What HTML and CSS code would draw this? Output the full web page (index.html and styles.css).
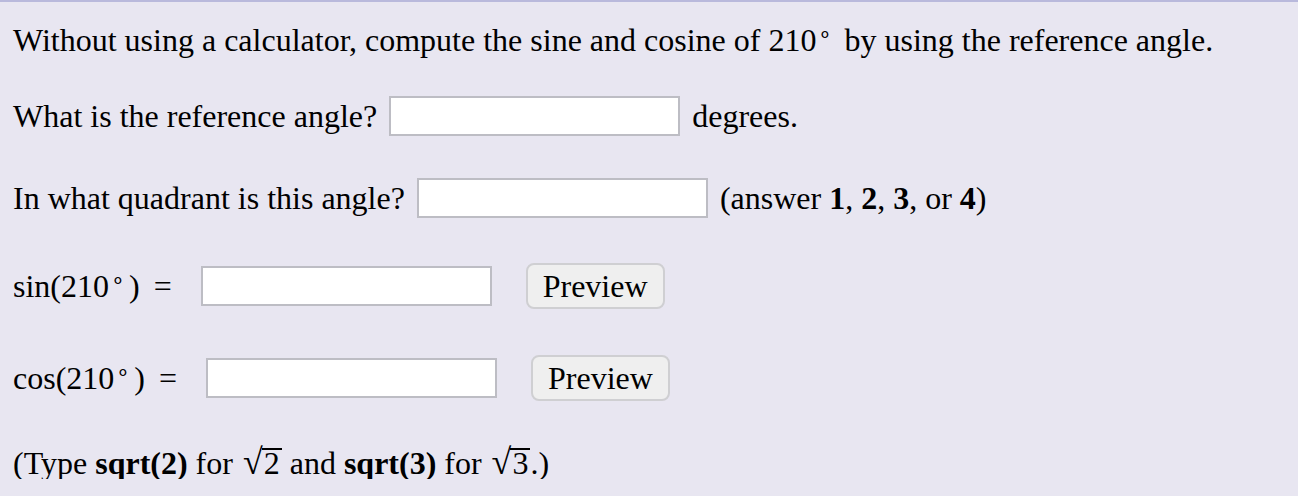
FILE: index.html
```html
<!DOCTYPE html>
<html lang="en">
<head>
	<meta charset="UTF-8">
	<title>Reference angle</title>
	<link rel="stylesheet" href="styles.css">
</head>
<body>
	<div class="wrap">
		<p class="row intro">Without using a calculator, compute the sine and cosine of <span class="math">210<sup class="deg">&#8728;</sup></span> by using the reference angle.</p>
		<div class="row field first">
			<span>What is the reference angle?</span>
			<input type="text" class="ans">
			<span>degrees.</span>
		</div>
		<div class="row field second">
			<span>In what quadrant is this angle?</span>
			<input type="text" class="ans">
			<span>(answer <b>1</b>, <b>2</b>, <b>3</b>, or <b>4</b>)</span>
		</div>
		<div class="row field trig">
			<span class="math fn">sin(210<sup class="deg">&#8728;</sup>) <span class="eq">=</span></span>
			<input type="text" class="ans">
			<button class="preview">Preview</button>
		</div>
		<div class="row field trig cos">
			<span class="math fn">cos(210<sup class="deg">&#8728;</sup>) <span class="eq">=</span></span>
			<input type="text" class="ans">
			<button class="preview">Preview</button>
		</div>
		<p class="row note">(Type <b>sqrt(2)</b> for <span class="sqrt"><span class="rt">&#8730;</span><span class="rad">2</span></span> and <b>sqrt(3)</b> for <span class="sqrt"><span class="rt">&#8730;</span><span class="rad">3</span></span>.)</p>
	</div>
</body>
</html>
```
FILE: styles.css
```css
*{
	margin: 0;
	padding: 0;
	box-sizing: border-box;
}
html,body{
	background: #e8e6f1;
}
body{
	font-family: "Liberation Serif", "Times New Roman", serif;
	font-size: 32px;
	color: #000;
	border-top: 2px solid #b9b9dc;
}
.wrap{
	padding: 0 13px;
}
.row{
	line-height: 32px;
}
.intro{
	margin-top: 22px;
}
.field{
	display: flex;
	align-items: center;
	height: 40px;
}
.first{margin-top: 40px;}
.second{margin-top: 42px;}
.trig{
	height: 46px;
	margin-top: 45px;
}
.cos{margin-top: 46px;}
.note{margin-top: 45px;}

.ans{
	width: 291px;
	height: 40px;
	border: 2px solid #bdbdc4;
	background: #fff;
	margin: 0 12px 0 12px;
	font: inherit;
}
.math{
	font-family: "Liberation Serif", serif;
}
.deg{
	font-size: 22px;
	vertical-align: 10px;
	line-height: 0;
	margin-left: 2px;
	margin-right: 4px;
}
.fn .eq{
	margin-left: 6px;
}
.trig .ans{
	margin: 0 34px 0 29px;
}
.preview{
	font: inherit;
	height: 46px;
	padding: 0 15px;
	border: 2px solid #cfcfd2;
	border-radius: 8px;
	background: #efefef;
	color: #000;
}
.sqrt{
	white-space: nowrap;
	margin-left: 2px;
}
.rt{
	font-size: 36px;
	margin-right: -1px;
}
.rad{
	border-top: 2px solid #000;
	padding: 0 2px;
	line-height: 26px;
	display: inline-block;
}
```
